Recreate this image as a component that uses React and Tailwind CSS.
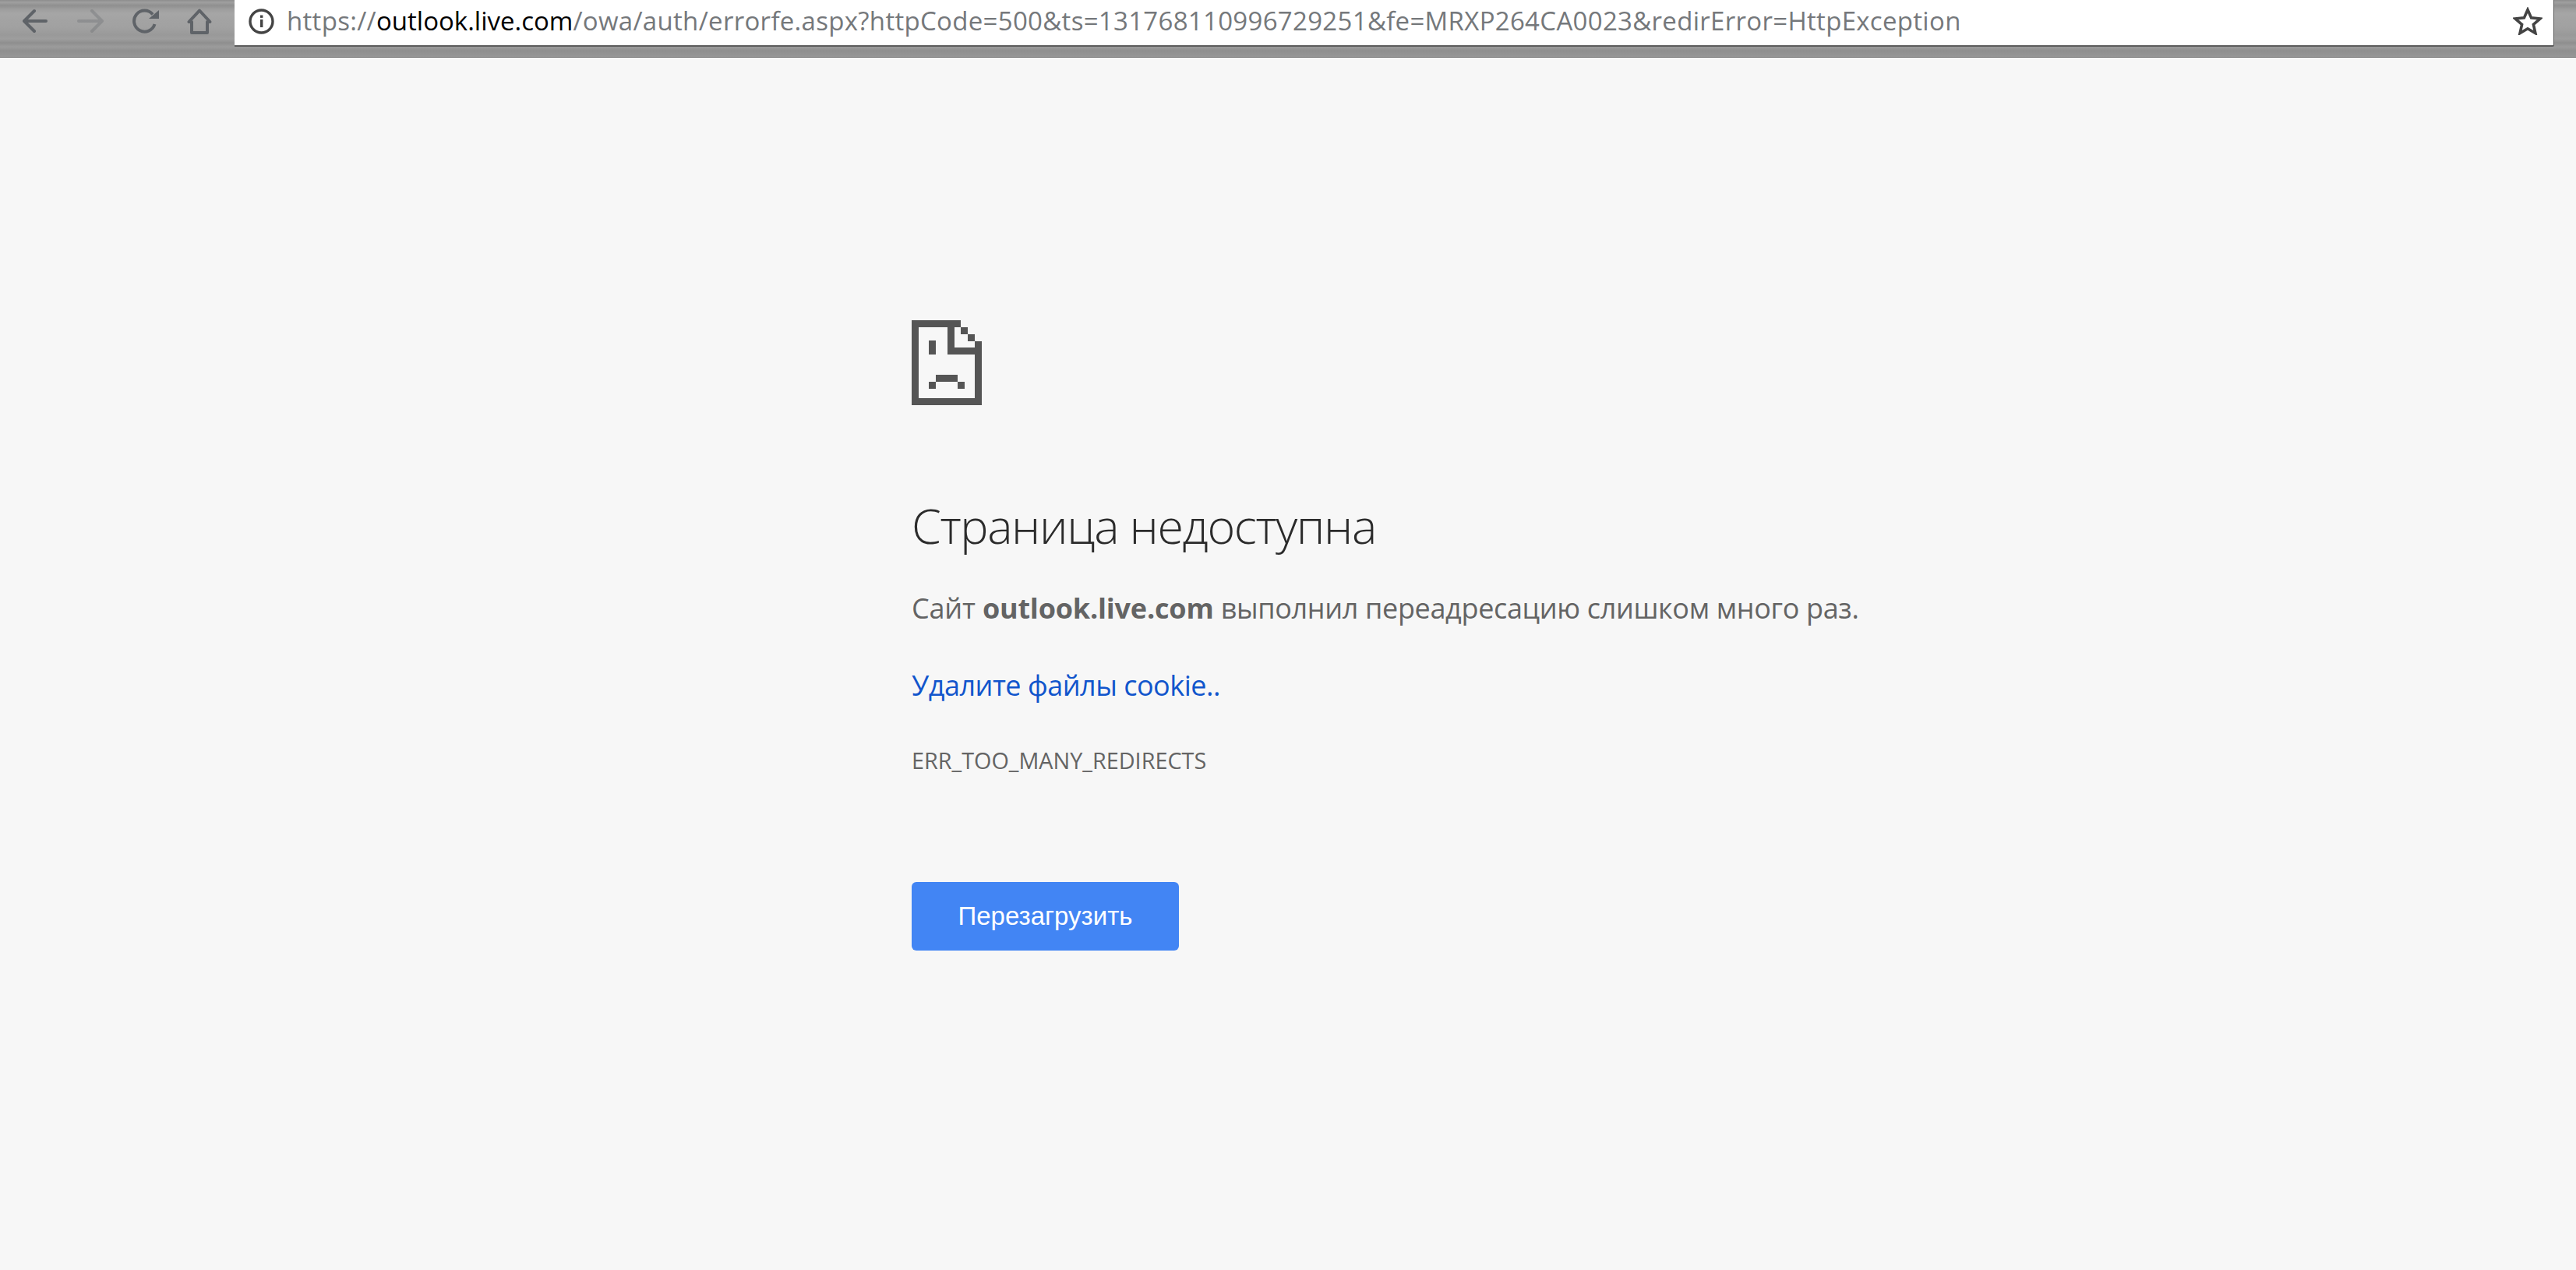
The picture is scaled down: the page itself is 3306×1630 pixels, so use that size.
const sans = "font-['Open_Sans','Noto_Sans',sans-serif]";

function SadFile() {
  return (
    <svg width="90" height="109" viewBox="90 63 270 327" fill="#555555" shapeRendering="crispEdges">
      <path fillRule="evenodd" d="M90 63H280V90H229V169H334V144H360V390H90ZM116 90V364H334V195H229V90Z" />
      <rect x="229" y="63" width="27" height="132" />
      <rect x="280" y="90" width="27" height="27" />
      <rect x="307" y="117" width="27" height="27" />
      <rect x="157" y="142" width="27" height="53" />
      <rect x="184" y="273" width="82" height="27" />
      <rect x="157" y="300" width="27" height="26" />
      <rect x="266" y="300" width="27" height="26" />
    </svg>
  );
}

export default function App() {
  return (
    <div className={`min-h-[1630px] bg-[#f7f7f7] ${sans}`}>
      <header className="h-[74px] flex items-start border-b border-[#6e6e6e] bg-[linear-gradient(180deg,#8c8c8c_0px,#a0a0a0_3px,#8f8f8f_7px,#9e9e9e_12px,#a6a6a6_18px,#a3a3a3_25px,#a1a1a1_35px,#999999_45px,#9e9e9e_50px,#8e8e8e_55px,#9c9c9c_60px,#8f8f8f_65px,#969696_73px)]">
        <nav className="w-[301px] pl-[29px] h-[60px] flex items-start pt-[11px] shrink-0">
          <svg className="w-[32px] h-[32px]" viewBox="0 0 32 32" fill="none" stroke="#5f6368" strokeWidth="4" strokeLinecap="round" strokeLinejoin="round"><path d="M30 16H3M15 3 2 16l13 13" /></svg>
          <svg className="w-[34px] h-[32px] ml-[38px] opacity-30" viewBox="0 0 34 32" fill="none" stroke="#5f6368" strokeWidth="4" strokeLinecap="round" strokeLinejoin="round"><path d="M2 16h29M19 3l13 13-13 13" /></svg>
          <svg className="w-[34px] h-[33px] ml-[37px]" viewBox="0 0 34 33" fill="none" stroke="#5f6368" strokeWidth="4"><path d="M28.500 20A13.500 13.500 0 1 1 26 7.500" /><path d="M34 2V13H21Z" fill="#5f6368" stroke="none" /></svg>
          <svg className="w-[32px] h-[33px] ml-[36px]" viewBox="0 0 32 33" fill="none" stroke="#5f6368" strokeWidth="4" strokeLinejoin="round"><path d="M16 2.500 2.500 17H6V31H26V17H29.500Z" /></svg>
        </nav>
        <div className="w-[2977px] h-[60px] bg-white border-b-2 border-r border-[#5c5c5c] rounded-br-[2px] flex items-start">
          <svg className="w-[33px] h-[33px] ml-[18px] mt-[11px] shrink-0" viewBox="0 0 33 33" fill="none"><circle cx="16.500" cy="16.500" r="14.500" stroke="#444" strokeWidth="3.400" /><rect x="15" y="14" width="3.400" height="10" fill="#444" /><rect x="15" y="8.500" width="3.400" height="3.400" fill="#444" /></svg>
          <div className="ml-[16px] mt-[4px] text-[33px] leading-[46px] text-[#75787b] whitespace-nowrap w-[2800px]">
            <span className="tracking-[0.3px]">https://</span><span className="text-black">outlook.live.com</span><span className="tracking-[0.3px]">/owa/auth/errorfe.aspx?httpCode=500&amp;ts=131768110996729251&amp;fe=MRXP264CA0023&amp;redirError=HttpException</span>
          </div>
          <svg className="w-[38px] h-[36px] ml-auto mr-[14px] mt-[9px] shrink-0" viewBox="0 0 38 36" fill="none" stroke="#444" strokeWidth="3.600" strokeLinejoin="miter"><path d="m19 3.500 4.600 10.400 11.300 1.100-8.500 7.500 2.500 11.100-9.900-5.800-9.900 5.800 2.500-11.100L3.100 15l11.300-1.100Z" /></svg>
        </div>
      </header>
      <main className="pl-[1170px] pt-[337px]">
        <SadFile />
        <h1 className="mt-[115px] text-[61px] leading-[80px] font-light tracking-[-1.4px] text-[#2b2b2b]">Страница недоступна</h1>
        <p className="mt-[40px] text-[36px] leading-[52px] tracking-[-0.2px] text-[#646464]">Сайт <b className="font-bold">outlook.live.com</b> <span className="tracking-[-0.35px]">выполнил переадресацию слишком много раз.</span></p>
        <a className="block mt-[47px] text-[36px] leading-[52px] tracking-[-0.5px] text-[#1155cc]">Удалите файлы cookie..</a>
        <div className="mt-[52px] text-[28.800px] leading-[36px] text-[#646464]">ERR_TOO_MANY_REDIRECTS</div>
        <button className="block mt-[138px] w-[343px] h-[88px] rounded-[6px] bg-[#4285f4] text-white text-[33px] font-['Liberation_Sans',sans-serif]">Перезагрузить</button>
      </main>
    </div>
  );
}
